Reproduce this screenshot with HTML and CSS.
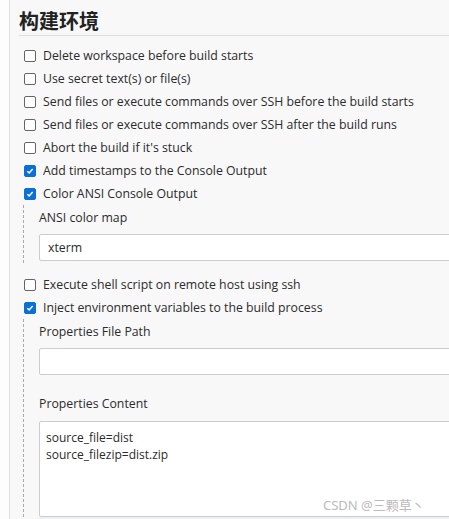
FILE: index.html
```html
<!DOCTYPE html>
<html lang="zh">
<head>
<meta charset="utf-8">
<link rel="stylesheet" href="styles.css">
</head>
<body>
<div class="panel">
  <h2 class="title">构建环境</h2>
  <div class="row"><span class="cb"></span><span class="lbl">Delete workspace before build starts</span></div>
  <div class="row"><span class="cb"></span><span class="lbl">Use secret text(s) or file(s)</span></div>
  <div class="row"><span class="cb"></span><span class="lbl">Send files or execute commands over SSH before the build starts</span></div>
  <div class="row"><span class="cb"></span><span class="lbl">Send files or execute commands over SSH after the build runs</span></div>
  <div class="row"><span class="cb"></span><span class="lbl">Abort the build if it's stuck</span></div>
  <div class="row"><span class="cb on"><svg viewBox="0 0 12 12" width="12" height="12"><path d="M2.8 6.2 L5 8.4 L9.2 3.6" fill="none" stroke="#fff" stroke-width="1.8"/></svg></span><span class="lbl">Add timestamps to the Console Output</span></div>
  <div class="row"><span class="cb on"><svg viewBox="0 0 12 12" width="12" height="12"><path d="M2.8 6.2 L5 8.4 L9.2 3.6" fill="none" stroke="#fff" stroke-width="1.8"/></svg></span><span class="lbl">Color ANSI Console Output</span></div>
  <div class="nested ansi">
    <div class="field-label">ANSI color map</div>
    <div class="input"><span>xterm</span></div>
  </div>
  <div class="row first-after"><span class="cb"></span><span class="lbl">Execute shell script on remote host using ssh</span></div>
  <div class="row"><span class="cb on"><svg viewBox="0 0 12 12" width="12" height="12"><path d="M2.8 6.2 L5 8.4 L9.2 3.6" fill="none" stroke="#fff" stroke-width="1.8"/></svg></span><span class="lbl">Inject environment variables to the build process</span></div>
  <div class="nested inject">
    <div class="field-label">Properties File Path</div>
    <div class="input"></div>
    <div class="field-label second">Properties Content</div>
    <div class="textarea">
      <div class="code">source_file=dist</div>
      <div class="code">source_filezip=dist.zip</div>
      <div class="watermark">CSDN @三颗草丶</div>
    </div>
    <div class="strip"></div>
  </div>
</div>
</body>
</html>
```
FILE: styles.css
```css
html, body {
  margin: 0;
  padding: 0;
  background: #fdfdfd;
  overflow: hidden;
  height: 519px;
}
body {
  font-family: "Open Sans", "Noto Sans", "Noto Sans CJK SC", sans-serif;
  color: #2b2b2b;
  font-size: 12.3px;
}
.panel {
  margin-left: 9px;
  border-left: 1px solid #ddd;
  background: #f8f8f8;
  padding-left: 8px;
  height: 519px;
  box-sizing: border-box;
  overflow: hidden;
}
.title {
  margin: 0 0 0 1px;
  padding-top: 7px;
  height: 28px;
  font-size: 20px;
  font-weight: bold;
  line-height: 28px;
  color: #222;
  border-bottom: 1px solid #ddd;
  font-family: "Noto Sans CJK SC", sans-serif;
}
.row {
  display: flex;
  align-items: center;
  height: 23px;
  padding-left: 6px;
}
.title + .row { margin-top: 8px; }
.cb {
  width: 10px;
  height: 10px;
  border: 1px solid #666;
  border-radius: 2px;
  background: #fff;
  margin-right: 7px;
  display: flex;
  align-items: center;
  justify-content: center;
  flex-shrink: 0;
}
.cb.on {
  background: #0a6fd6;
  border-color: #0a6fd6;
}
.lbl {
  white-space: nowrap;
}
.nested {
  margin-left: 5px;
  border-left: 1px dashed #aaa;
  padding-left: 15px;
}
.ansi {
  padding-top: 3px;
  padding-bottom: 2px;
}
.first-after { margin-top: 10px; }
.field-label {
  height: 20px;
  line-height: 20px;
  font-size: 12.3px;
}
.input {
  margin-top: 6px;
  height: 25px;
  width: 440px;
  background: #fff;
  border: 1px solid #ccc;
  border-radius: 2px;
  display: flex;
  align-items: center;
  padding-left: 8px;
  box-sizing: content-box;
}
.inject {
  padding-top: 3px;
}
.field-label.second { margin-top: 19px; }
.textarea {
  margin-top: 7px;
  height: 87px;
  width: 440px;
  background: #fff;
  border: 1px solid #ccc;
  border-radius: 2px;
  padding: 7px 6px 0 6px;
  position: relative;
  box-sizing: content-box;
}
.code {
  line-height: 17px;
  font-size: 12px;
}
.watermark {
  position: absolute;
  left: 283px;
  top: 73px;
  color: #bbb;
  font-size: 13px;
  font-family: "Noto Sans", "Noto Sans CJK SC", sans-serif;
}
.strip {
  height: 10px;
  background: #eef1f4;
  width: 440px;
}
```
